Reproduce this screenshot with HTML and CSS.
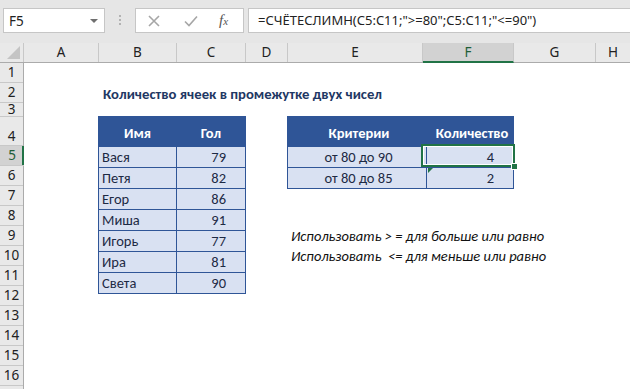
FILE: index.html
```html
<!DOCTYPE html>
<html lang="ru">
<head>
    <meta charset="UTF-8">
    <title>СЧЁТЕСЛИМН</title>
    <link rel="stylesheet" href="styles.css">
</head>
<body>

<div class="toolbar">
    <div class="namebox">
        <span>F5</span>
        <i class="caret"></i>
    </div>
    <div class="grip"></div>
    <div class="fbuttons">
        <svg class="fbtn" width="14" height="14" viewBox="0 0 14 14"><path d="M2 2 L12 12 M12 2 L2 12" stroke="#a6a6a6" stroke-width="1.6" fill="none"/></svg>
        <svg class="fbtn" width="16" height="14" viewBox="0 0 16 14"><path d="M2 7.5 L6 11.5 L14 2.5" stroke="#a6a6a6" stroke-width="1.6" fill="none"/></svg>
        <span class="fx">f<sub>x</sub></span>
    </div>
    <div class="formula">=СЧЁТЕСЛИМН(C5:C11;"&gt;=80";C5:C11;"&lt;=90")</div>
</div>

<div class="sheet">
    <div class="colheads">
        <div class="corner">
            <svg width="13" height="13" viewBox="0 0 13 13"><polygon points="13,0 13,13 0,13" fill="#c4c4c4"/></svg>
        </div>
        <div class="colhead col-a">A</div>
        <div class="colhead col-b">B</div>
        <div class="colhead col-c">C</div>
        <div class="colhead col-d">D</div>
        <div class="colhead col-e">E</div>
        <div class="colhead col-f active">F</div>
        <div class="colhead col-g">G</div>
        <div class="colhead col-h">H</div>
    </div>

    <div class="sheet-body">
        <div class="rowheads">
            <div class="rowhead">1</div>
            <div class="rowhead">2</div>
            <div class="rowhead short">3</div>
            <div class="rowhead tall">4</div>
            <div class="rowhead active">5</div>
            <div class="rowhead">6</div>
            <div class="rowhead">7</div>
            <div class="rowhead">8</div>
            <div class="rowhead">9</div>
            <div class="rowhead">10</div>
            <div class="rowhead">11</div>
            <div class="rowhead">12</div>
            <div class="rowhead">13</div>
            <div class="rowhead">14</div>
            <div class="rowhead">15</div>
            <div class="rowhead">16</div>
            <div class="rowhead"></div>
        </div>

        <div class="cells">
            <div class="title">Количество ячеек в промежутке двух чисел</div>

            <table class="xtable names">
                <tr><th>Имя</th><th>Гол</th></tr>
                <tr><td>Вася</td><td class="num">79</td></tr>
                <tr><td>Петя</td><td class="num">82</td></tr>
                <tr><td>Егор</td><td class="num">86</td></tr>
                <tr><td>Миша</td><td class="num">91</td></tr>
                <tr><td>Игорь</td><td class="num">77</td></tr>
                <tr><td>Ира</td><td class="num">81</td></tr>
                <tr><td>Света</td><td class="num">90</td></tr>
            </table>

            <table class="xtable criteria">
                <tr><th>Критерии</th><th>Количество</th></tr>
                <tr><td class="mid">от 80 до 90</td><td class="num">4</td></tr>
                <tr><td class="mid">от 80 до 85</td><td class="num flagged">2</td></tr>
            </table>

            <div class="selection"><i class="handle"></i></div>

            <div class="note note-1">Использовать &gt; = для больше или равно</div>
            <div class="note note-2">Использовать  &lt;= для меньше или равно</div>
        </div>
    </div>
</div>

</body>
</html>
```

FILE: styles.css
```css
body {
    margin: 0;
    width: 630px;
    height: 389px;
    overflow: hidden;
    background: #fff;
    font-family: 'Carlito', 'Lato', sans-serif;
}

/* formula bar */
.toolbar {
    height: 43px;
    background: #e6e6e6;
    display: flex;
    align-items: flex-start;
    padding-top: 8px;
    box-sizing: border-box;
}
.namebox {
    width: 102px;
    height: 25px;
    margin-left: 3px;
    background: #fff;
    border: 1px solid #c6c6c6;
    box-sizing: border-box;
    display: flex;
    align-items: center;
    justify-content: space-between;
    padding: 0 6px 0 5px;
    font-family: 'Noto Sans', sans-serif;
    font-size: 13.5px;
    color: #222;
}
.caret {
    width: 0;
    height: 0;
    border-left: 4px solid transparent;
    border-right: 4px solid transparent;
    border-top: 4px solid #6f6f6f;
}
.grip {
    width: 2px;
    height: 12px;
    margin: 6px 14px 0 14px;
    background: radial-gradient(circle, #b3b3b3 45%, transparent 50%) 0 0 / 2px 4px;
}
.fbuttons {
    width: 109px;
    height: 25px;
    background: #fff;
    border: 1px solid #c6c6c6;
    box-sizing: border-box;
    display: flex;
    align-items: center;
    padding-left: 11px;
    gap: 22px;
}
.fx {
    font-family: 'Liberation Serif', serif;
    font-style: italic;
    font-size: 15px;
    color: #555;
    margin-left: -2px;
}
.fx sub {
    font-size: 11px;
    vertical-align: 0;
}
.formula {
    flex: 1;
    height: 25px;
    margin-left: 4px;
    background: #fff;
    border: 1px solid #c6c6c6;
    border-right: none;
    box-sizing: border-box;
    padding-left: 9px;
    line-height: 23px;
    font-family: 'Noto Sans', sans-serif;
    font-size: 13px;
    color: #222;
    white-space: nowrap;
}

/* headers */
.colheads {
    display: flex;
    height: 19px;
    background: #e9e9e9;
    border-bottom: 1px solid #ababab;
}
.corner {
    width: 24px;
    flex: none;
    box-sizing: border-box;
    border-right: 1px solid #c8c8c8;
    display: flex;
    align-items: flex-end;
    justify-content: flex-end;
    padding: 0 3px 3px 0;
}
.colhead {
    flex: none;
    box-sizing: border-box;
    border-right: 1px solid #c8c8c8;
    text-align: center;
    line-height: 19px;
    font-family: 'Noto Sans', sans-serif;
    font-size: 13.5px;
    color: #222;
}
.col-a { width: 75px; }
.col-b { width: 78px; }
.col-c { width: 69px; }
.col-d { width: 42px; }
.col-e { width: 135px; }
.col-f { width: 91px; }
.col-g { width: 82px; }
.col-h { flex: 1; border-right: none; }
.colhead.active {
    background: #d2d2d2;
    color: #1e5e38;
    border-bottom: 2px solid #217346;
    line-height: 18px;
    height: 20px;
}

.sheet-body {
    display: flex;
}
.rowheads {
    width: 24px;
    flex: none;
    background: #e9e9e9;
    border-right: 1px solid #ababab;
    box-sizing: border-box;
}
.rowhead {
    height: 20px;
    box-sizing: border-box;
    border-bottom: 1px solid #c8c8c8;
    text-align: center;
    line-height: 19px;
    font-family: 'Noto Sans', sans-serif;
    font-size: 13.5px;
    color: #222;
}
.rowhead.short { height: 14px; line-height: 12px; }
.rowhead.tall { height: 29px; line-height: 38px; }
.rowhead.active {
    background: #d2d2d2;
    color: #1e5e38;
    box-shadow: inset -2px 0 0 #217346;
    margin-right: -1px;
}

/* worksheet */
.cells {
    flex: 1;
    display: grid;
    grid-template-columns: 75px 78px 69px 42px 135px 91px 82px 1fr;
    grid-template-rows: 20px 20px 14px 29px repeat(13, 20px);
    font-size: 14.5px;
    color: #1d2a44;
}
.title {
    grid-column: 2 / 7;
    grid-row: 2;
    padding-left: 4px;
    font-size: 14.7px;
    font-weight: bold;
    color: #1f3864;
    line-height: 22px;
}
.xtable {
    border-collapse: collapse;
    table-layout: fixed;
    width: 100%;
    height: 100%;
    margin: -1px 0 0 -1px;
}
.xtable th {
    height: 29px;
    padding: 0;
    background: #2f5597;
    color: #fff;
    font-weight: bold;
    border: 1px solid #2f5597;
    vertical-align: bottom;
    line-height: 26px;
}
.xtable td {
    height: 20px;
    padding: 0 0 0 3px;
    background: #d9e1f2;
    border: 1px solid #2f5597;
    line-height: 18px;
    white-space: nowrap;
}
.xtable td.num {
    text-align: right;
    padding-right: 19px;
}
.xtable td.mid {
    text-align: center;
}
.names {
    grid-column: 2 / 4;
    grid-row: 4 / 12;
    width: calc(100% + 1px);
    height: calc(100% + 1px);
}
.names th:first-child { width: 77px; }
.criteria {
    grid-column: 5 / 7;
    grid-row: 4 / 7;
    width: calc(100% + 1px);
    height: calc(100% + 1px);
}
.criteria th:first-child { width: 134px; }
.criteria th {
    padding-left: 4px;
}
.flagged {
    position: relative;
}
.flagged::before {
    content: "";
    position: absolute;
    left: 1px;
    top: 0;
    border-top: 5px solid #217346;
    border-right: 5px solid transparent;
}

.selection {
    grid-column: 6;
    grid-row: 5;
    margin: -2px -1px -1px -2px;
    border: 2px solid #217346;
    box-shadow: inset 0 0 0 1px #fff;
    position: relative;
    z-index: 2;
}
.handle {
    position: absolute;
    right: -5px;
    bottom: -5px;
    width: 5px;
    height: 5px;
    background: #217346;
    border: 1px solid #fff;
}

.note {
    grid-column: 5 / 9;
    padding-left: 3px;
    font-style: italic;
    color: #111;
    white-space: pre;
    line-height: 20px;
}
.note-1 { grid-row: 9; }
.note-2 { grid-row: 10; }
```
